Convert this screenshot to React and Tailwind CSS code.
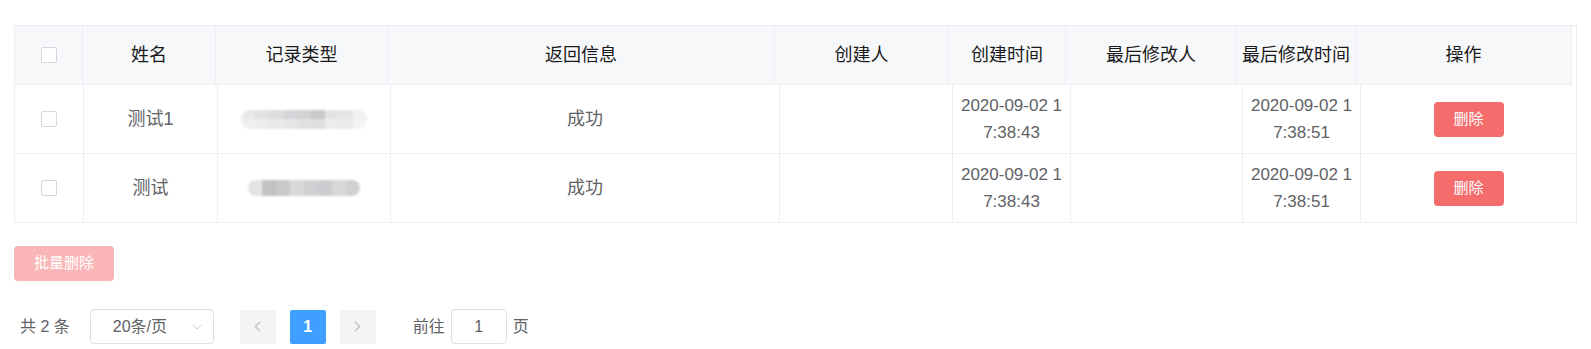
import { ChevronLeft, ChevronRight, ChevronDown } from 'lucide-react';

const headerCols = [
  { w: 'w-[68px]', label: null },
  { w: 'w-[133px]', label: '姓名' },
  { w: 'w-[172px]', label: '记录类型' },
  { w: 'w-[387px]', label: '返回信息' },
  { w: 'w-[174px]', label: '创建人' },
  { w: 'w-[117px]', label: '创建时间' },
  { w: 'w-[171px]', label: '最后修改人' },
  { w: 'w-[119px]', label: '最后修改时间' },
  { w: 'w-[216px]', label: '操作' },
];

const bodyW = ['w-[69px]', 'w-[134px]', 'w-[173px]', 'w-[389px]', 'w-[173px]', 'w-[118px]', 'w-[172px]', 'w-[118px]', 'w-[215px]'];

const rows = [
  {
    name: '测试1',
    blur: [
      ['bg-[#e9e9e9]', 'bg-[#efefef]'],
      ['bg-[#e2e2e2]', 'bg-[#ececec]'],
      ['bg-[#dedede]', 'bg-[#e9e9e9]'],
      ['bg-[#d6d6da]', 'bg-[#e6e6e8]'],
      ['bg-[#d2d2d5]', 'bg-[#e1e1e3]'],
      ['bg-[#c9c9cc]', 'bg-[#dedee0]'],
      ['bg-[#e3e3e5]', 'bg-[#ececee]'],
      ['bg-[#e6e5e3]', 'bg-[#ebebea]'],
      ['bg-[#f1f1f3]', 'bg-[#f4f4f6]'],
    ],
    created: '7:38:43',
    modified: '7:38:51',
  },
  {
    name: '测试',
    blur: [
      ['bg-[#e4e4e4]', 'bg-[#e4e4e4]'],
      ['bg-[#c2c2c4]', 'bg-[#c2c2c4]'],
      ['bg-[#c9c9cc]', 'bg-[#c9c9cc]'],
      ['bg-[#d9d8d6]', 'bg-[#d9d8d6]'],
      ['bg-[#d0d0d3]', 'bg-[#d0d0d3]'],
      ['bg-[#cdcdd1]', 'bg-[#cdcdd1]'],
      ['bg-[#d8d8d8]', 'bg-[#d8d8d8]'],
      ['bg-[#d0d0d2]', 'bg-[#d0d0d2]'],
    ],
    created: '7:38:43',
    modified: '7:38:51',
  },
];

const Checkbox = () => (
  <span className="block w-4 h-4 rounded-[2px] border border-[#d4d7de] bg-white" />
);

const Blurred = ({ blocks, tall }) => (
  <div className={`flex overflow-hidden rounded-full blur-[0.8px] ${tall ? 'h-[19px]' : 'h-[16px]'}`}>
    {blocks.map((b, i) => (
      <div key={i} className="flex flex-col w-[14px]">
        <div className={`flex-1 ${b[0]}`} />
        <div className={`flex-1 ${b[1]}`} />
      </div>
    ))}
  </div>
);

const DateCell = ({ tail }) => (
  <div className="flex flex-col items-center text-[17px] leading-[27px] text-[#606266]">
    <span className="whitespace-nowrap">2020-09-02 1</span>
    <span className="whitespace-nowrap">{tail}</span>
  </div>
);

export default function App() {
  return (
    <div className="bg-white w-[1591px] h-[349px] pt-[25px] pl-[14px] font-['Liberation_Sans','Noto_Sans_CJK_SC',sans-serif]">
      {/* Table */}
      <div className="w-[1563px] border-l border-t border-r border-[#ebeef5]">
        <div className="flex h-[59px]">
          {headerCols.map((c, i) => (
            <div
              key={i}
              className={`${c.w} shrink-0 flex items-center justify-center border-r border-b border-[#ebeef5] bg-[#f7f8fa] text-[18px] text-[#1a1a1a]`}
            >
              {c.label ? <span className="whitespace-nowrap">{c.label}</span> : <Checkbox />}
            </div>
          ))}
          <div className="w-[4px] shrink-0 bg-white" />
        </div>

        {rows.map((r, ri) => (
          <div key={ri} className="flex h-[69px] border-b border-[#ebeef5] text-[18px] text-[#606266]">
            <div className={`${bodyW[0]} shrink-0 flex items-center justify-center border-r border-[#ebeef5]`}>
              <Checkbox />
            </div>
            <div className={`${bodyW[1]} shrink-0 flex items-center justify-center border-r border-[#ebeef5]`}>
              {r.name}
            </div>
            <div className={`${bodyW[2]} shrink-0 flex items-center justify-center border-r border-[#ebeef5]`}>
              <Blurred blocks={r.blur} tall={ri === 0} />
            </div>
            <div className={`${bodyW[3]} shrink-0 flex items-center justify-center border-r border-[#ebeef5]`}>
              成功
            </div>
            <div className={`${bodyW[4]} shrink-0 border-r border-[#ebeef5]`} />
            <div className={`${bodyW[5]} shrink-0 flex items-center justify-center border-r border-[#ebeef5]`}>
              <DateCell tail={r.created} />
            </div>
            <div className={`${bodyW[6]} shrink-0 border-r border-[#ebeef5]`} />
            <div className={`${bodyW[7]} shrink-0 flex items-center justify-center border-r border-[#ebeef5]`}>
              <DateCell tail={r.modified} />
            </div>
            <div className={`${bodyW[8]} shrink-0 flex items-center justify-center`}>
              <button className="w-[70px] h-[35px] rounded-[4px] bg-[#f56c6c] text-white text-[15px]">删除</button>
            </div>
          </div>
        ))}
      </div>

      {/* Batch delete */}
      <button
        disabled
        className="mt-[23px] w-[100px] h-[35px] rounded-[4px] bg-[#fab6b6] text-white text-[15px]"
      >
        批量删除
      </button>

      {/* Pagination */}
      <div className="mt-[28px] flex items-center h-[35px] text-[16px] text-[#606266]">
        <span className="ml-[6px] whitespace-pre">共 2 条</span>
        <div className="ml-[20px] w-[124px] h-[35px] rounded-[4px] border border-[#dcdfe6] flex items-center pl-[22px] pr-[8px]">
          <span className="flex-1">20条/页</span>
          <ChevronDown className="w-[16px] h-[16px] text-[#c0c4cc]" strokeWidth={1.25} />
        </div>
        <div className="ml-[26px] flex items-center gap-[14px]">
          <span className="w-[36px] h-[34px] rounded-[2px] bg-[#f4f4f5] flex items-center justify-center">
            <ChevronLeft className="w-[17px] h-[17px] text-[#c0c4cc]" strokeWidth={2.25} />
          </span>
          <span className="w-[36px] h-[34px] rounded-[2px] bg-[#409eff] flex items-center justify-center text-white font-bold">1</span>
          <span className="w-[36px] h-[34px] rounded-[2px] bg-[#f4f4f5] flex items-center justify-center">
            <ChevronRight className="w-[17px] h-[17px] text-[#c0c4cc]" strokeWidth={2.25} />
          </span>
        </div>
        <span className="ml-[37px]">前往</span>
        <span className="ml-[6px] w-[56px] h-[35px] rounded-[4px] border border-[#dcdfe6] flex items-center justify-center">1</span>
        <span className="ml-[6px]">页</span>
      </div>
    </div>
  );
}
